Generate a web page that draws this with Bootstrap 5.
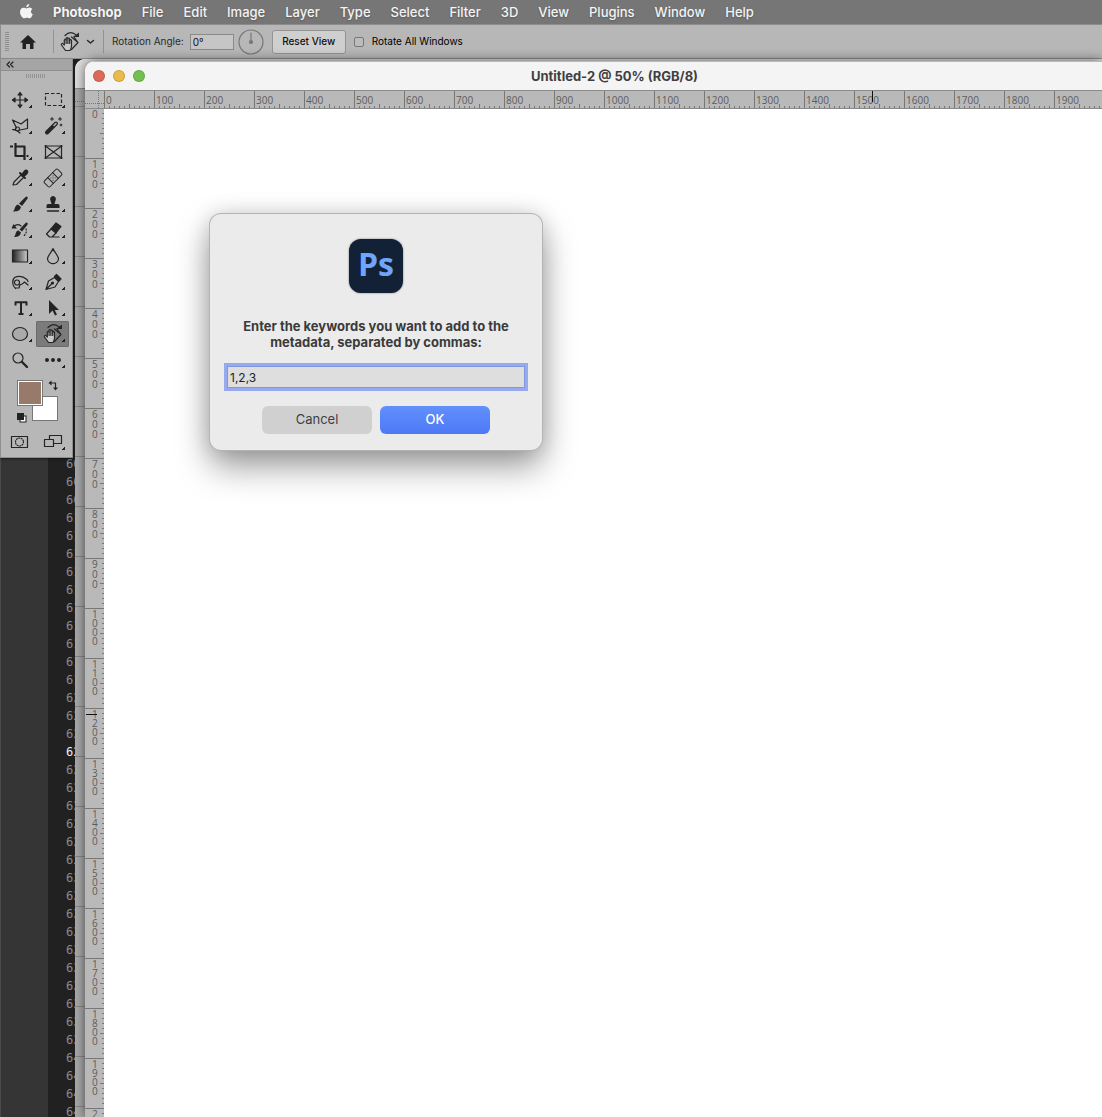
<!DOCTYPE html>
<html lang="en">
<head>
<meta charset="utf-8">
<meta name="viewport" content="width=device-width, initial-scale=1">
<title>Photoshop</title>
<link href="https://cdn.jsdelivr.net/npm/bootstrap@5.3.0/dist/css/bootstrap.min.css" rel="stylesheet">
<style>
body{font-family:Inter,"Open Sans",sans-serif;font-size:13px;color:#2a2a2a;background:#222}
button{font:inherit;color:inherit}
.sysmenu{height:24px;background:#767676;gap:20px;padding:0 26px 0 19px}
.sysmenu .nav-link{color:#f4f4f4;font-weight:500;padding:0;line-height:23px;text-shadow:0 1px 2px #0004}
.sysmenu .nav-link.app-name{font-weight:700;margin-left:-1px}
.options{height:35px;background:#b7b7b7;border-bottom:1px solid #8e8e8e;border-top:1px solid #8c8c8c;border-left:1px solid #8e8e8e;font-size:10px;padding-left:4px}
.vgrip{width:4px;height:20px;background:repeating-linear-gradient(#8f8f8f 0 1px,transparent 1px 2px)}
.sep{width:1px;height:23px;background:#929292}
.plain{background:none;border:0;padding:0;line-height:0}
.home{margin:0 14px 0 8px}
.anglelabel{margin-right:6px}
.angle{width:44px;height:16px;border:1px solid #8a8a8a;background:#c6c6c6;padding:0 2px;font-size:10px;border-radius:0;color:#111}
.reset{width:74px;height:24px;border:1px solid #949494;background:#cfcfcf;border-radius:3px;font-weight:500;padding:0;color:#111}
.tick{appearance:none;width:10px;height:10px;border:1px solid #777;border-radius:2px;background:#bcbcbc;margin:0}
.desk{background:#1d1d1f;min-height:0}
.editor{inset:0 auto 0 0;width:75px;border-left:1px solid #4a4a4a;overflow:hidden}
.side{flex:0 0 47px;background:#353535}
.gutter{background:#212121;color:#8b8b8b;font:12px/18px "DejaVu Sans Mono",monospace;padding:396px 0 0 18px;margin:0;list-style:none;overflow:hidden;min-width:0}
.gutter .now{color:#eee}
.docwin{border-radius:10px 0 0 0;overflow:hidden;right:0;bottom:0;background:#fff}
.docwin.back{left:75px;top:0}
.docwin.front{left:85px;top:2px;box-shadow:0 0 12px #0009}
.titlebar{flex:0 0 30px;background:linear-gradient(#b9b9b9 0 1px,#f4f4f4 1px);padding:0 18px 0 8px;border-bottom:1px solid #8b8b8b}
.back .titlebar{background:#dedede}
.titlebar h1{font-size:13px;font-weight:700;margin:0;color:#3f3f3f;line-height:28px}
.lamp{width:12px;height:12px;border-radius:50%;border:1px solid #0002}
.red{background:#dc6a5a}.amber{background:#e8bb4b}.green{background:#74bf4f}
.rulers{display:grid;grid-template:18px 1fr/19px 1fr;min-height:0}
.ruler{font:10px/10px "Open Sans",sans-serif;color:#5c5c5c;overflow:hidden;display:flex;background-color:#b9b9b9}
.corner{background:#b9b9b9;border-bottom:1px solid #8a8a8a;position:relative}
.corner::before,.corner::after{content:"";position:absolute}
.corner::before{left:13px;top:0;bottom:0;border-left:1px dotted #777}
.corner::after{top:12px;left:0;right:0;border-top:1px dotted #777}
.ruler>span{flex:0 0 50px}
.hrule{border-bottom:1px solid #8a8a8a;background-image:linear-gradient(90deg,#777 1px,transparent 1px),linear-gradient(90deg,#777 1px,transparent 1px),linear-gradient(90deg,#777 1px,transparent 1px);background-size:50px 100%,50px 4px,5px 2px;background-position:0 0,25px 100%,0 100%;background-repeat:repeat-x}
.hrule>span{padding:4px 0 0 2px}
.vrule{flex-direction:column;background-image:linear-gradient(#777 1px,transparent 1px),linear-gradient(#777 1px,transparent 1px),linear-gradient(#777 1px,transparent 1px);background-size:100% 50px,4px 50px,2px 5px;background-position:0 -1px,100% 24px,100% -1px;background-repeat:repeat-y}
.vrule>span{width:14px;padding-left:7px;word-break:break-all;line-height:10px}
.vrule>.long{line-height:9px;padding-top:1px}
.back .ruler,.back .corner{background-color:#a9a9a9}
.back .vrule{background-image:linear-gradient(#888 1px,transparent 1px);background-size:100% 50px;background-position:0 -1px}
.hmark{position:absolute;left:768px;top:0;width:1px;height:11px;background:#111}
.vmark{position:absolute;top:605px;left:1px;width:11px;height:1px;background:#111}
.toolbox{left:0;top:0;width:73px;background:#b7b7b7;border:1px solid #8e8e8e;border-top:0;box-shadow:0 1px 2px #0008;color:#242424}
.toolhead{height:12px;background:#a5a5a5;border-bottom:1px solid #8e8e8e;padding-left:5px}
.hgrip{width:20px;height:4px;margin:3px 0 9px 25px;background:repeating-linear-gradient(90deg,#939393 0 1px,transparent 1px 2px)}
.toolgrid{display:grid;grid-template-columns:33px 33px;padding:0 0 2px 2px}
.tool{height:26px;position:relative;display:flex;align-items:center;justify-content:center;background:none;border:0;padding:0;border-radius:2px}
.tool.more::after{content:"";position:absolute;right:4px;bottom:5px;width:3px;height:3px;background:linear-gradient(135deg,transparent 45%,#222 50%)}
.tool.on{background:#7b7b7b;box-shadow:inset 0 0 0 1px #6b6b6b}
.tool svg,.icon{fill:none;stroke:currentColor;stroke-width:1.2;stroke-linejoin:round;stroke-linecap:round}
.f{fill:currentColor}
.swatches{height:54px;padding:4px 0 0 15px}
.prompt{left:210px;top:155px;width:332px;padding:25px 14px 16px;background:#ebebeb;border-radius:11px;box-shadow:0 0 0 1px #b4b4b4,0 16px 34px #0006,0 0 22px #0002}
.pslogo{width:54px;height:54px;border-radius:12px;background:#122136;color:#6fa6fb;font:700 32px/50px "Open Sans",sans-serif;text-align:center;box-shadow:0 0 2px #0008}
.prompt label{font-weight:700;line-height:16px;color:#3a3a3a;margin:25px 10px 16px}
.keywords{width:100%;height:22px;border:1px solid #8196e0;border-radius:0;background:#dedede;outline:3px solid #98aaee;padding:0 2px;font-size:12px;color:#222}
.fieldwrap{padding:0 3px;margin-bottom:18px}
.choice{width:110px;height:28px;border:0;border-radius:6px;background:#d0d0d0;color:#404040;padding:0}
.choice.ok{background:linear-gradient(#6290fb,#4d78f7);color:#fff;font-weight:500}
</style>
<script src="https://cdn.jsdelivr.net/npm/bootstrap@5.3.0/dist/js/bootstrap.bundle.min.js"></script>
</head>
<body class="vh-100 overflow-hidden d-flex flex-column">
<svg class="d-none">
<symbol id="rotate" viewBox="0 0 24 24"><path d="M7 5.500C10 2.500 14 2 17.500 4.500"/><path class="f" stroke="none" d="M15 7h6V2.500z"/><path d="M13.500 7l6.500 5.500-6.500 7M16 7l4 5.500"/><path fill="#c8c8c8" d="M7.500 20.500L3.500 15c-.7-1.200.8-2 1.600-1.100L6.300 15V10q.9-1.400 1.800 0V8.300q.9-1.400 1.800 0V8.800q.9-1.400 1.800 0v1.500q.9-1.200 1.800 0V16q0 2-1.500 4.500z"/><path d="M8.100 10v3.500M9.900 9v4.500M11.700 10v3.500"/></symbol>
</svg>

<nav class="sysmenu nav flex-nowrap align-items-center flex-shrink-0">
<a href="#" class="plain" aria-label="System menu"><svg width="15" height="18" viewBox="0 0 15 18" fill="#f4f4f4"><path d="M10.200 1c.1 1.700-1.200 3.200-2.900 3.300C7.100 2.700 8.600 1.100 10.200 1zM13.300 6.200c-2 1.200-1.700 4.100.5 5-.6 1.700-1.900 4.100-3.300 4.100-1 0-1.400-.6-2.600-.6s-1.600.6-2.600.6C3.500 15.300 1 11.800 1 8.900c0-2.700 1.700-4.200 3.500-4.200 1.200 0 2.100.7 2.900.7.700 0 1.800-.8 3.200-.8 1.100.1 2.100.6 2.700 1.600z"/></svg></a>
<a class="nav-link app-name" href="#">Photoshop</a><a class="nav-link" href="#">File</a><a class="nav-link" href="#">Edit</a><a class="nav-link" href="#">Image</a><a class="nav-link" href="#">Layer</a><a class="nav-link" href="#">Type</a><a class="nav-link" href="#">Select</a><a class="nav-link" href="#">Filter</a><a class="nav-link" href="#">3D</a><a class="nav-link" href="#">View</a><a class="nav-link" href="#">Plugins</a><a class="nav-link" href="#">Window</a><a class="nav-link" href="#">Help</a>
</nav>

<div class="options d-flex align-items-center flex-shrink-0">
<div class="vgrip"></div>
<button class="plain home" aria-label="Home"><svg width="22" height="18" viewBox="0 0 22 18" fill="#222"><path d="M11 2L3 9.500h2.500V16H9v-5h4v5h3.500V9.500H19z"/></svg></button>
<div class="sep"></div>
<button class="plain ms-1" aria-label="Rotate view tool"><svg class="icon" width="24" height="24"><use href="#rotate"/></svg></button>
<button class="plain ms-1 me-2" aria-label="Tool presets"><svg class="icon" width="9" height="6" viewBox="0 0 9 6"><path stroke-width="1.500" d="M1.500 1.500l3 2.500 3-2.500"/></svg></button>
<div class="sep me-2"></div>
<label for="angle" class="anglelabel">Rotation Angle:</label>
<input id="angle" class="angle" value="0°">
<svg class="icon mx-1" width="26" height="26" viewBox="0 0 26 26"><g style="color:#777"><circle cx="13" cy="13" r="12" stroke="#777"/><path d="M13 13V4" stroke="#777"/><circle class="f" cx="13" cy="13" r="1.500"/></g></svg>
<button class="reset ms-1">Reset View</button>
<input type="checkbox" id="allwin" class="tick ms-2"><label for="allwin" class="ms-2 text-black">Rotate All Windows</label>
</div>

<main class="desk flex-grow-1 position-relative">
<section class="editor position-absolute d-flex"><div class="side"></div><ol class="gutter flex-grow-1" id="lines"></ol></section>

<section class="docwin back position-absolute d-flex flex-column">
<div class="titlebar"></div>
<div class="rulers flex-grow-1"><div class="corner"></div><div class="ruler hrule"></div><div class="ruler vrule"></div></div>
</section>

<section class="docwin front position-absolute d-flex flex-column">
<div class="titlebar d-flex align-items-center"><div class="d-flex gap-2"><i class="lamp red"></i><i class="lamp amber"></i><i class="lamp green"></i></div><h1 class="flex-grow-1 text-center">Untitled-2 @ 50% (RGB/8)</h1></div>
<div class="rulers flex-grow-1"><div class="corner"></div><div class="ruler hrule position-relative" id="across"><i class="hmark"></i></div><div class="ruler vrule position-relative" id="down"><i class="vmark"></i></div><div class="bg-white"></div></div>
</section>

<aside class="toolbox position-absolute">
<div class="toolhead d-flex align-items-center"><svg class="icon" width="8" height="7" viewBox="0 0 8 7"><path d="M3.500 1L1 3.500 3.500 6M7 1L4.500 3.500 7 6"/></svg></div>
<div class="hgrip"></div>
<div class="toolgrid">
<button class="tool more" aria-label="Move"><svg width="24" height="24" viewBox="0 0 24 24"><path d="M12 5v14M5 12h14"/><path class="f" d="M12 4.500l-2 2.500h4zM12 19.500l-2-2.500h4zM4.500 12L7 10v4zM19.500 12L17 10v4z"/></svg></button>
<button class="tool more" aria-label="Marquee"><svg width="24" height="24" viewBox="0 0 24 24"><rect x="4.500" y="5.500" width="16" height="12" stroke-dasharray="3.500 2" stroke-linecap="butt"/></svg></button>
<button class="tool more" aria-label="Lasso"><svg width="24" height="24" viewBox="0 0 24 24"><path d="M8.500 14L4.500 6 13 10l6.500-5v9.500L12 16"/><circle cx="9.500" cy="15" r="2"/><path d="M4.500 15.500l5.500 1.500M9.500 17l2.500 2M4.500 15.500h2"/></svg></button>
<button class="tool more" aria-label="Magic wand"><svg width="24" height="24" viewBox="0 0 24 24"><path d="M6 18.500L15 9.500" stroke-width="4"/><path d="M13 11.500l2-2" stroke="#b7b7b7" stroke-width="1.500"/><path d="M11 3.500v3M9.500 5h3M19 3.500v3M17.500 5h3M20 10v2M19 11h2" stroke-width="1"/></svg></button>
<button class="tool more" aria-label="Crop"><svg width="24" height="24" viewBox="0 0 24 24"><path d="M7.500 3v13H16M2 6.500h3M8 6.500h8.500V20M18.500 16h2" stroke-width="2.200" stroke-linecap="butt"/></svg></button>
<button class="tool" aria-label="Frame"><svg width="24" height="24" viewBox="0 0 24 24"><rect x="4.500" y="6" width="16" height="12"/><path d="M5 6.500l15 11M20 6.500L5 17.500"/><path d="M4.500 6h.1M20.500 6h.1M4.500 18h.1M20.500 18h.1" stroke-width="2"/></svg></button>
<button class="tool more" aria-label="Eyedropper"><svg width="24" height="24" viewBox="0 0 24 24"><path d="M5 19l1-3 7-7 2.500 2.500-7 7z"/><path class="f" d="M12 7l5 5M14 9l2.500-3.500c2-2 4 0 2 2L15.500 10.500z" stroke-width="2"/></svg></button>
<button class="tool more" aria-label="Healing brush"><svg width="24" height="24" viewBox="0 0 24 24"><g transform="rotate(-45 12 12)" stroke-width="1"><rect x="2.500" y="8" width="19" height="8" rx="1.500"/><path d="M8.500 8v8M15.500 8v8"/><path d="M10.500 10.500h.1M13.500 10.500h.1M10.500 13.500h.1M13.500 13.500h.1M12 12h.1"/></g></svg></button>
<button class="tool more" aria-label="Brush"><svg width="24" height="24" viewBox="0 0 24 24"><path class="f" d="M18.500 4.500c1.500 0 1.500 1.500.8 2.500l-5.300 7-3-2.500 6-6zM10 12.500l3 2.500c-1 4-4 4.500-8 4.500 2-1.500 1.500-6 5-7z" stroke="none"/></svg></button>
<button class="tool more" aria-label="Clone stamp"><svg width="24" height="24" viewBox="0 0 24 24"><path class="f" d="M12 4a3 3 0 00-2.500 4.500l1 3.500H7q-1.500 0-1.500 1.500V16h13v-2.500Q18.500 12 17 12h-3.500l1-3.500A3 3 0 0012 4z" stroke="none"/><path d="M6.500 19h11" stroke-width="1.500"/></svg></button>
<button class="tool more" aria-label="History brush"><svg width="24" height="24" viewBox="0 0 24 24"><path class="f" d="M18.500 4.500c1.500 0 1.500 1.500.8 2.500l-5.300 6.500-2.500-2 6-6.500zM10.500 12.500l2.500 2c-1 4-4 4.500-7 4.500 2-1.500 1-6 4.500-6.500zM3.500 10.500L5.500 6l3.500 4.500z" stroke="none"/><path d="M6 8.500C8 6.500 11 6.500 13 8"/><path d="M18 11c1 3-.5 6-3 7.500" stroke-dasharray="1 2"/></svg></button>
<button class="tool more" aria-label="Eraser"><svg width="24" height="24" viewBox="0 0 24 24"><path class="f" d="M10 11l5-6 5 3.500-5 6.500z"/><path d="M10 11l-4.500 5 3 3h2.500l4-4M9 19h9"/></svg></button>
<button class="tool more" aria-label="Gradient"><svg width="24" height="24" viewBox="0 0 24 24"><defs><linearGradient id="fade"><stop stop-color="#222"/><stop offset="1" stop-color="#ccc"/></linearGradient></defs><rect x="4.500" y="6" width="15" height="12" fill="url(#fade)"/></svg></button>
<button class="tool more" aria-label="Blur"><svg width="24" height="24" viewBox="0 0 24 24"><path d="M12 4.500c1 3.500 5.500 7 5.500 10.500A5 5 0 0112 19.500 5 5 0 016.500 15C6.500 11.500 11 8 12 4.500z"/></svg></button>
<button class="tool more" aria-label="Dodge"><svg width="24" height="24" viewBox="0 0 24 24"><path d="M7.500 18.500C4 16 4 10 6.500 7.500c4-2 9-1 12.500 2l1 2M11 18h-3.500M11 18l1-3.500c2 .5 3-1.500 4.500-2.500l3.500 3"/><circle cx="9" cy="12.500" r="2.500"/></svg></button>
<button class="tool more" aria-label="Pen"><svg width="24" height="24" viewBox="0 0 24 24"><path d="M5 19.500L7.500 11l6-3.500 4 4L14 17zM5.500 19l5.500-5.500"/><circle class="f" cx="11.500" cy="13" r="1"/><path class="f" d="M13.500 6.500l2-2 4.500 4.500-2 2z"/></svg></button>
<button class="tool more" aria-label="Type"><svg width="24" height="24" viewBox="0 0 24 24"><path d="M7.500 9.500V6.200h11v3.300M13 6v12M10.500 18h5" stroke-width="2" stroke-linecap="butt"/></svg></button>
<button class="tool more" aria-label="Path selection"><svg width="24" height="24" viewBox="0 0 24 24"><path class="f" d="M8 4v14l3.500-3.500L14 19.500l2-1-2.300-4.500H18z" stroke="none"/></svg></button>
<button class="tool more" aria-label="Ellipse"><svg width="24" height="24" viewBox="0 0 24 24"><ellipse cx="12" cy="12" rx="7.500" ry="6.500" fill="#aaa"/></svg></button>
<button class="tool more on" aria-label="Rotate view"><svg width="24" height="24"><use href="#rotate"/></svg></button>
<button class="tool" aria-label="Zoom"><svg width="24" height="24" viewBox="0 0 24 24"><circle cx="10" cy="10" r="5"/><path d="M14 14l5 5" stroke-width="2.400"/></svg></button>
<button class="tool more" aria-label="Edit toolbar"><svg width="24" height="24" viewBox="0 0 24 24"><g class="f" stroke="none"><circle cx="6" cy="12" r="2"/><circle cx="12" cy="12" r="2"/><circle cx="18" cy="12" r="2"/></g></svg></button>
</div>
<div class="swatches"><svg width="44" height="44" viewBox="0 0 44 44"><rect x="16.500" y="17.500" width="25" height="24" fill="#fff" stroke="#777"/><rect x="1.500" y="1.500" width="25" height="25" fill="#fff" stroke="#777"/><rect x="3" y="3" width="22" height="22" fill="#987a6b"/><g fill="none" stroke="#222" stroke-width="1.200"><path d="M34 4h5.500v6"/></g><path fill="#222" d="M32.500 4l3-2.500v5zM39.500 11.500L37 8.500h5z"/><rect x="4" y="37" width="6" height="6" fill="#fff" stroke="#222"/><path fill="#222" d="M1 34h7v7H1z"/></svg></div>
<div class="toolgrid">
<button class="tool" aria-label="Quick mask"><svg width="24" height="24" viewBox="0 0 24 24"><rect x="3.500" y="6.500" width="16" height="11"/><circle cx="11.500" cy="12" r="4" stroke-dasharray="1 1.500"/></svg></button>
<button class="tool more" aria-label="Screen mode"><svg width="24" height="24" viewBox="0 0 24 24"><rect x="8.500" y="5.500" width="12" height="8"/><rect x="3.500" y="9.500" width="9" height="7" fill="#b7b7b7"/></svg></button>
</div>
</aside>

<form class="prompt position-absolute d-flex flex-column align-items-stretch" onsubmit="return false">
<div class="pslogo mx-auto">Ps</div>
<label for="keywords" class="text-center">Enter the keywords you want to add to the metadata, separated by commas:</label>
<div class="fieldwrap"><input id="keywords" class="keywords d-block" value="1,2,3"></div>
<div class="d-flex justify-content-center gap-2"><button type="button" class="choice">Cancel</button><button class="choice ok">OK</button></div>
</form>
</main>
<script>
const lines = document.getElementById('lines');
for (let n = 607; n <= 643; n++) {
  const li = document.createElement('li');
  li.textContent = n;
  if (n === 623) li.className = 'now';
  lines.append(li);
}
function label(ruler, last) {
  for (let n = 0; n <= last; n += 100) {
    const s = document.createElement('span');
    s.textContent = n;
    if (n > 999) s.className = 'long';
    ruler.append(s);
  }
}
label(document.getElementById('across'), 1900);
label(document.getElementById('down'), 2000);
</script>
</body>
</html>
